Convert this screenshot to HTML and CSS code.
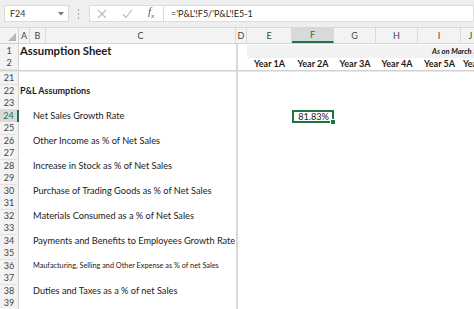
FILE: index.html
```html
<!DOCTYPE html>
<html lang="en">
<head>
  <meta charset="UTF-8" />
  <title>Assumption Sheet</title>
  <link rel="stylesheet" href="styles.css">
</head>
<body>

  <div class="formula-bar">
    <div class="name-box">
      <span>F24</span>
      <svg class="caret" width="6" height="4" viewBox="0 0 6 4"><path d="M0 0h6L3 3.5z" fill="#777"/></svg>
    </div>
    <div class="grip">
      <span></span><span></span><span></span>
    </div>
    <div class="fx-buttons">
      <svg width="10" height="10" viewBox="0 0 10 10"><path d="M1 1l8 8M9 1l-8 8" stroke="#b8b8b8" stroke-width="1.1"/></svg>
      <svg width="11" height="10" viewBox="0 0 11 10"><path d="M1 5.5l3 3L10 1" stroke="#b8b8b8" stroke-width="1.1" fill="none"/></svg>
      <span class="fx">f<sub>x</sub></span>
    </div>
    <div class="formula">='P&amp;L'!F5/'P&amp;L'!E5-1</div>
  </div>

  <div class="sheet">
    <div class="row col-heads">
      <div class="corner"><svg width="8" height="8" viewBox="0 0 8 8"><path d="M8 0v8H0z" fill="#b5b5b5"/></svg></div>
      <div class="ch">A</div>
      <div class="ch">B</div>
      <div class="ch">C</div>
      <div class="ch">D</div>
      <div class="ch">E</div>
      <div class="ch active">F</div>
      <div class="ch">G</div>
      <div class="ch">H</div>
      <div class="ch">I</div>
      <div class="ch">J</div>
    </div>

    <div class="row r1">
      <div class="rh">1</div>
      <div class="cell title">Assumption Sheet</div>
      <div class="cell"></div>
      <div class="cell band">As on March 31</div>
    </div>

    <div class="row r2">
      <div class="rh">2</div>
      <div class="cell span3"></div>
      <div class="cell"></div>
      <div class="cell yr">Year 1A</div>
      <div class="cell yr">Year 2A</div>
      <div class="cell yr">Year 3A</div>
      <div class="cell yr">Year 4A</div>
      <div class="cell yr">Year 5A</div>
      <div class="cell yr left">Year 6A</div>
    </div>

    <div class="freeze"></div>

    <div class="body">
      <div class="row"><div class="rh">21</div><div class="cell span3"></div></div>
      <div class="row"><div class="rh">22</div><div class="cell span3 head">P&amp;L Assumptions</div></div>
      <div class="row"><div class="rh">23</div><div class="cell span3"></div></div>
      <div class="row">
        <div class="rh active">24</div>
        <div class="cell span3 item">Net Sales Growth Rate</div>
        <div class="cell"></div>
        <div class="cell"></div>
        <div class="cell selected">81.83%<span class="handle"></span></div>
      </div>
      <div class="row"><div class="rh">25</div><div class="cell span3"></div></div>
      <div class="row"><div class="rh">26</div><div class="cell span3 item">Other Income as % of Net Sales</div></div>
      <div class="row"><div class="rh">27</div><div class="cell span3"></div></div>
      <div class="row"><div class="rh">28</div><div class="cell span3 item">Increase in Stock as % of Net Sales</div></div>
      <div class="row"><div class="rh">29</div><div class="cell span3"></div></div>
      <div class="row"><div class="rh">30</div><div class="cell span3 item">Purchase of Trading Goods as % of Net Sales</div></div>
      <div class="row"><div class="rh">31</div><div class="cell span3"></div></div>
      <div class="row"><div class="rh">32</div><div class="cell span3 item">Materials Consumed as a % of Net Sales</div></div>
      <div class="row"><div class="rh">33</div><div class="cell span3"></div></div>
      <div class="row"><div class="rh">34</div><div class="cell span3 item">Payments and Benefits to Employees Growth Rate</div></div>
      <div class="row"><div class="rh">35</div><div class="cell span3"></div></div>
      <div class="row"><div class="rh">36</div><div class="cell span3 item small">Maufacturing, Selling and Other Expense as % of net Sales</div></div>
      <div class="row"><div class="rh">37</div><div class="cell span3"></div></div>
      <div class="row"><div class="rh">38</div><div class="cell span3 item">Duties and Taxes as a % of net Sales</div></div>
      <div class="row"><div class="rh">39</div><div class="cell span3"></div></div>
    </div>
    <div class="freeze-v"></div>
  </div>

</body>
</html>
```

FILE: styles.css
```css
body {
  margin: 0;
  width: 474px;
  height: 309px;
  overflow: hidden;
  background: #ffffff;
  font-family: 'Lato', 'Open Sans', sans-serif;
  color: #1a1a1a;
}

/* formula bar */

.formula-bar {
  display: flex;
  align-items: center;
  height: 28px;
  background: #efefef;
  border-bottom: 1px solid #d6d6d6;
  box-sizing: border-box;
  padding-left: 4px;
}

.name-box {
  display: flex;
  align-items: center;
  justify-content: space-between;
  width: 65px;
  height: 17px;
  box-sizing: border-box;
  background: #fff;
  border: 1px solid #d9d9d9;
  padding: 0 4px 0 5px;
  font-size: 9px;
  color: #333;
}

.grip {
  display: flex;
  flex-direction: column;
  gap: 2px;
  margin: 0 10px 0 9px;
}

.grip span {
  width: 1px;
  height: 2px;
  background: #a8a8a8;
}

.fx-buttons {
  display: flex;
  align-items: center;
  gap: 15px;
  height: 17px;
  width: 74px;
  box-sizing: border-box;
  padding-left: 7px;
  background: #fff;
  border: 1px solid #dcdcdc;
  border-right: none;
}

.fx {
  font-family: 'Liberation Serif', serif;
  font-style: italic;
  font-size: 11px;
  color: #555;
  line-height: 1;
}

.fx sub {
  font-size: 7px;
}

.formula {
  flex: 1;
  height: 17px;
  line-height: 16px;
  box-sizing: border-box;
  background: #fff;
  border: 1px solid #dcdcdc;
  padding-left: 7px;
  font-size: 9px;
  color: #222;
  white-space: nowrap;
}

/* sheet grid */

.sheet {
  position: relative;
  height: 281px;
  overflow: hidden;
}

.row {
  display: grid;
  grid-template-columns: 19px 11px 16px 190px 11px 45px 42px 42px 42px 43px 20px;
  height: 12.5px;
}

.col-heads {
  height: 15px;
  background: #f3f3f3;
  border-bottom: 1px solid #d4d4d4;
}

.corner {
  display: flex;
  align-items: flex-end;
  justify-content: flex-end;
  padding: 0 2px 2px 0;
  border-right: 1px solid #d4d4d4;
}

.ch {
  font-size: 9px;
  line-height: 15px;
  text-align: center;
  color: #444;
  border-right: 1px solid #dadada;
}

.ch.active {
  background: #d9d9d9;
  color: #217346;
  border-bottom: 2px solid #217346;
  box-sizing: border-box;
  line-height: 13px;
}

.rh {
  background: #f3f3f3;
  border-right: 1px solid #d4d4d4;
  border-bottom: 1px solid #e2e2e2;
  box-sizing: border-box;
  font-size: 9px;
  line-height: 12px;
  text-align: center;
  color: #444;
}

.rh.active {
  background: #d9d9d9;
  color: #217346;
  border-right: 2px solid #217346;
}

.cell {
  font-size: 9.2px;
  line-height: 12.5px;
  white-space: nowrap;
}

.span3 {
  grid-column: span 3;
}

.r1 {
  height: 13px;
}

.r1 .rh {
  line-height: 13px;
}

.title {
  grid-column: span 3;
  font-size: 11.3px;
  font-weight: bold;
  line-height: 14px;
  padding-left: 1px;
}

.band {
  grid-column: span 6;
  background: #f2f2f2;
  font-size: 7.5px;
  font-weight: bold;
  font-style: italic;
  line-height: 13px;
  margin-top: 1px;
  padding-left: 185px;
  overflow: hidden;
}

.r2 {
  height: 13px;
}

.yr {
  font-weight: bold;
  font-size: 9px;
  text-align: center;
  line-height: 13px;
}

.yr.left {
  text-align: left;
  padding-left: 2px;
  overflow: hidden;
}

.freeze {
  height: 1px;
  background: #d2d2d2;
  border-bottom: 1px solid #e8e8e8;
}

.freeze-v {
  position: absolute;
  left: 236px;
  top: 16px;
  bottom: 0;
  width: 2px;
  background: #d8d8d8;
}

.head {
  font-weight: bold;
  font-size: 9px;
  padding-left: 1px;
}

.item {
  padding-left: 14px;
}

.item.small {
  font-size: 7.3px;
}

.selected {
  position: relative;
  border: 2px solid #217346;
  box-sizing: border-box;
  text-align: right;
  padding-right: 3px;
  line-height: 9px;
}

.handle {
  position: absolute;
  right: -4px;
  bottom: -4px;
  width: 4px;
  height: 4px;
  background: #217346;
  border: 1px solid #fff;
}
```
